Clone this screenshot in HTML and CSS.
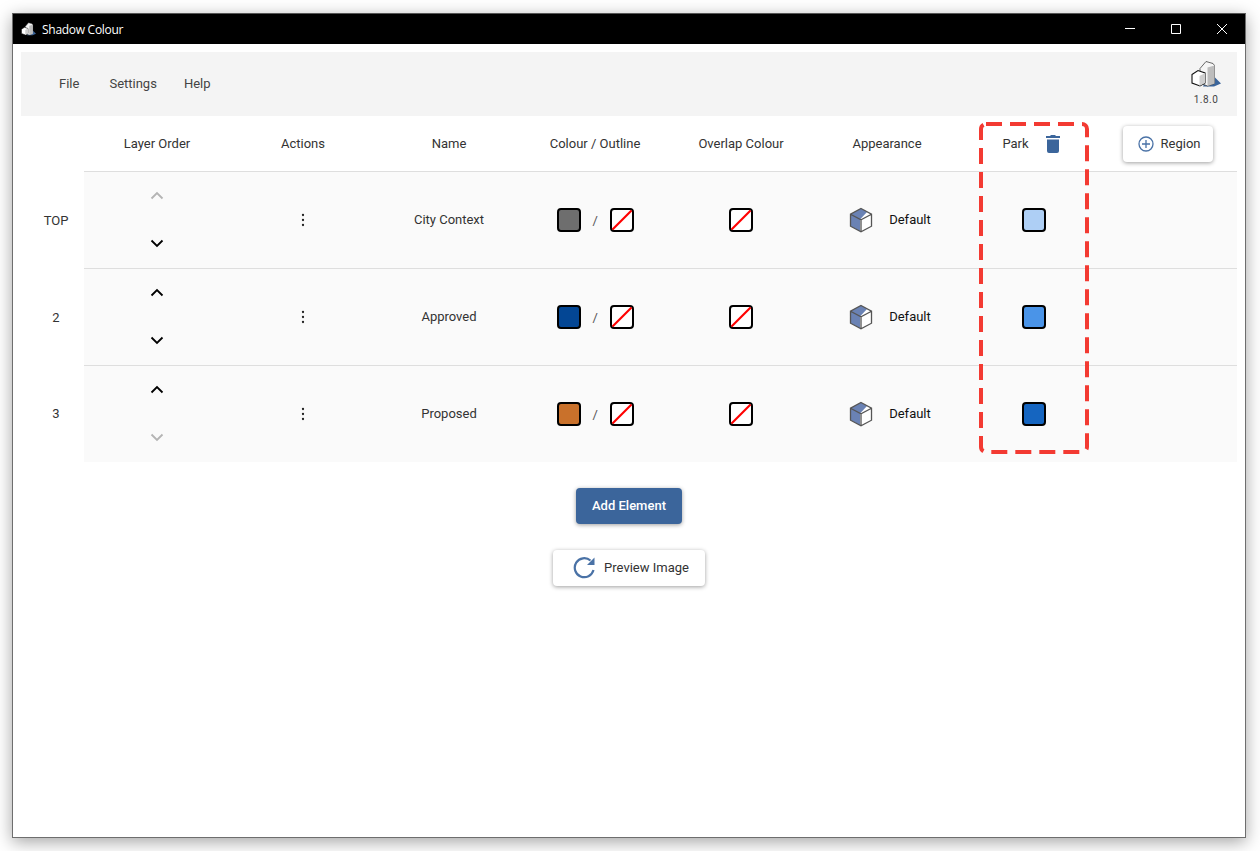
FILE: index.html
```html
<!DOCTYPE html>
<html lang="en">
<head>
<meta charset="utf-8">
<title>Shadow Colour</title>
<link rel="stylesheet" href="styles.css">
</head>
<body>
<svg width="0" height="0" class="defs">
  <defs>
    <symbol id="up" viewBox="0 0 14 9"><path d="M1.500 7.500 7 2l5.500 5.500" fill="none" stroke="currentColor" stroke-width="1.800"/></symbol>
    <symbol id="down" viewBox="0 0 14 9"><path d="M1.500 1.500 7 7l5.500-5.500" fill="none" stroke="currentColor" stroke-width="1.800"/></symbol>
    <symbol id="dots" viewBox="0 0 4 14"><circle cx="2" cy="2" r="1.150"/><circle cx="2" cy="7" r="1.150"/><circle cx="2" cy="12" r="1.150"/></symbol>
    <symbol id="none" viewBox="0 0 24 24"><rect x="1" y="1" width="22" height="22" rx="3" fill="#fff" stroke="#000" stroke-width="2"/><path d="M2.500 21.500 21.500 2.500" stroke="#f00" stroke-width="2.200"/></symbol>
    <symbol id="cube" viewBox="0 0 24 26"><path d="M12 1.500 22.500 7.200v12L12 24.800 1.500 19.200v-12z" fill="#fff"/><path d="M12 1.500 1.500 7.200v12l9.500 5V12.500L18 5z" fill="#6a82b4"/><path d="M12 1.500 22.500 7.200v12L12 24.800 1.500 19.200v-12zM1.500 7.200 12 12.800l10.500-5.600M12 12.800v12" fill="none" stroke="#555" stroke-width="1.300"/></symbol>
    <symbol id="building" viewBox="0 0 30 28">
      <path d="M12 26.500h11l7-3-6-6-8 0z" fill="#3b659b"/>
      <path d="M9 8.500 15 1.500l7 2 1.500 2v18l-7 2.500-7.500-3z" fill="#f6f6f6" stroke="#444" stroke-width=".8"/>
      <path d="M16.500 7.500v18.500l7-2.500V5.500z" fill="#bdbdbd"/>
      <path d="M1 14.500 7 10.500l7 2.500v10l-5 3-8-3z" fill="#fff" stroke="#111" stroke-width="1.100"/>
      <path d="M8.500 16v10l5.500-3V13z" fill="#cfcfcf"/>
    </symbol>
  </defs>
</svg>
<div class="window">
  <header class="titlebar">
    <svg class="app-icon"><use href="#building"/></svg>
    <span class="title">Shadow Colour</span>
    <div class="controls">
      <svg class="ctl" viewBox="0 0 46 30"><path d="M18 14.500h10" stroke="#fff" fill="none"/></svg>
      <svg class="ctl" viewBox="0 0 46 30"><path d="M18.500 10.500h9v9h-9z" stroke="#fff" fill="none"/></svg>
      <svg class="ctl" viewBox="0 0 46 30"><path d="M18 10l10 10M28 10 18 20" stroke="#fff" fill="none"/></svg>
    </div>
  </header>
  <main class="content">
    <nav class="toolbar">
      <span class="menu m-file">File</span>
      <span class="menu m-settings">Settings</span>
      <span class="menu m-help">Help</span>
      <div class="version">
        <svg class="logo"><use href="#building"/></svg>
        <span>1.8.0</span>
      </div>
    </nav>
    <div class="table">
      <div class="head">
        <span class="cell">Layer Order</span>
        <span class="cell">Actions</span>
        <span class="cell">Name</span>
        <span class="cell">Colour / Outline</span>
        <span class="cell">Overlap Colour</span>
        <span class="cell">Appearance</span>
        <span class="cell park-head">Park
          <svg class="trash" viewBox="0 0 14 18"><path d="M5 0h4l1 1h4v2H0V1h4zM1 4.500h12V16a2 2 0 0 1-2 2H3a2 2 0 0 1-2-2z" fill="#3b659b"/></svg>
        </span>
        <span class="cell">
          <button class="btn region">
            <svg class="plus" viewBox="0 0 16 16"><circle cx="8" cy="8" r="7" fill="none" stroke="#4a72a6" stroke-width="1.300"/><path d="M8 4v8M4 8h8" stroke="#4a72a6" stroke-width="1.300"/></svg>
            Region
          </button>
        </span>
      </div>

      <div class="row-wrap">
        <span class="rank">TOP</span>
        <div class="row">
          <div class="cell order"><svg class="chev off"><use href="#up"/></svg><svg class="chev"><use href="#down"/></svg></div>
          <div class="cell"><svg class="dots"><use href="#dots"/></svg></div>
          <div class="cell name">City Context</div>
          <div class="cell colours"><i class="swatch c-grey"></i><span class="slash">/</span><svg class="nofill"><use href="#none"/></svg></div>
          <div class="cell"><svg class="nofill"><use href="#none"/></svg></div>
          <div class="cell look"><svg class="cube"><use href="#cube"/></svg><span>Default</span></div>
          <div class="cell"><i class="swatch c-light"></i></div>
          <div class="cell"></div>
        </div>
      </div>

      <div class="row-wrap">
        <span class="rank">2</span>
        <div class="row">
          <div class="cell order"><svg class="chev"><use href="#up"/></svg><svg class="chev"><use href="#down"/></svg></div>
          <div class="cell"><svg class="dots"><use href="#dots"/></svg></div>
          <div class="cell name">Approved</div>
          <div class="cell colours"><i class="swatch c-navy"></i><span class="slash">/</span><svg class="nofill"><use href="#none"/></svg></div>
          <div class="cell"><svg class="nofill"><use href="#none"/></svg></div>
          <div class="cell look"><svg class="cube"><use href="#cube"/></svg><span>Default</span></div>
          <div class="cell"><i class="swatch c-mid"></i></div>
          <div class="cell"></div>
        </div>
      </div>

      <div class="row-wrap">
        <span class="rank">3</span>
        <div class="row">
          <div class="cell order"><svg class="chev"><use href="#up"/></svg><svg class="chev off"><use href="#down"/></svg></div>
          <div class="cell"><svg class="dots"><use href="#dots"/></svg></div>
          <div class="cell name">Proposed</div>
          <div class="cell colours"><i class="swatch c-orange"></i><span class="slash">/</span><svg class="nofill"><use href="#none"/></svg></div>
          <div class="cell"><svg class="nofill"><use href="#none"/></svg></div>
          <div class="cell look"><svg class="cube"><use href="#cube"/></svg><span>Default</span></div>
          <div class="cell"><i class="swatch c-blue"></i></div>
          <div class="cell"></div>
        </div>
      </div>
    </div>
    <div class="actions">
      <button class="btn add">Add Element</button>
      <button class="btn preview">
        <svg class="refresh" viewBox="0 0 24 24"><path d="M20.500 14a9.500 9.500 0 1 1-3-9.500" fill="none" stroke="#4a72a6" stroke-width="2.200"/><path d="M21.500 1.500v7.500h-7.500z" fill="#4a72a6"/></svg>
        Preview Image
      </button>
    </div>
    <svg class="highlight" viewBox="0 0 110 332"><rect x="2" y="2" width="106" height="328" rx="5" fill="none" stroke="#f33a32" stroke-width="4" stroke-dasharray="16 8"/></svg>
  </main>
</div>
</body>
</html>
```

FILE: styles.css
```css
* { box-sizing: border-box; }
html, body { margin: 0; height: 100%; background: #fff; overflow: hidden; }
body { padding: 13px 0 0 12px; font-family: Roboto, "Liberation Sans", sans-serif; font-size: 13px; color: #333; }
.defs { position: absolute; }
.window {
  width: 1234px;
  height: 825px;
  background: #fff;
  border: 1px solid #6e6e6e;
  border-top-color: #555;
  box-shadow: 0 4px 16px rgba(0, 0, 0, .36);
  display: flex;
  flex-direction: column;
}
.titlebar { height: 30px; flex: none; background: #000; color: #fff; display: flex; align-items: center; padding-left: 8px; }
.app-icon { width: 15px; height: 14px; margin-right: 6px; }
.title { font-family: "Open Sans", sans-serif; font-size: 12px; letter-spacing: -.28px; }
.controls { margin-left: auto; display: flex; }
.ctl { width: 46px; height: 30px; }
.content { position: relative; flex: 1; padding: 8px 8px 0; }
.toolbar { height: 64px; background: #f4f4f4; display: flex; align-items: center; position: relative; }
.menu { color: #444; padding-bottom: 2px; }
.m-file { margin-left: 38px; }
.m-settings { margin-left: 30px; }
.m-help { margin-left: 27px; }
.version { margin-left: auto; margin-right: 16px; width: 30px; display: flex; flex-direction: column; align-items: center; font-size: 10px; letter-spacing: .5px; color: #444; gap: 6px; padding-bottom: 3px; }
.logo { width: 30px; height: 28px; }
.table { display: flex; flex-direction: column; }
.head { margin-left: 63px; height: 56px; display: grid; grid-template-columns: repeat(6, 146px) 147px 130px; border-bottom: 1px solid #dedede; }
.cell { display: flex; align-items: center; justify-content: center; min-width: 0; }
.row-wrap { display: flex; height: 97px; }
.row-wrap:last-child { height: 96px; }
.rank { width: 63px; flex: none; display: flex; align-items: center; justify-content: center; padding-left: 7px; }
.row-wrap:last-child .rank { padding-bottom: 2px; }
.row { flex: 1; display: grid; grid-template-columns: repeat(6, 146px) 147px 130px; background: #fafafa; border-bottom: 1px solid #dedede; }
.row-wrap:last-child .row { border-bottom: 0; }
.order { flex-direction: column; gap: 39px; padding-bottom: 2px; }
.chev { width: 14px; height: 9px; color: #000; display: block; }
.chev.off { color: #b4b4b4; }
.dots { width: 4px; height: 14px; fill: #222; }
.name { padding-bottom: 2px; }
.swatch { display: block; width: 24px; height: 24px; border: 2px solid #000; border-radius: 4px; }
.c-grey { background: #6e6e6e; }
.c-light { background: #aecff5; }
.c-navy { background: #034694; }
.c-mid { background: #4a94e8; }
.c-orange { background: #c9712b; }
.c-blue { background: #1565c0; }
.nofill { width: 24px; height: 24px; display: block; }
.colours { gap: 12px; }
.slash { color: #555; width: 5px; text-align: center; }
.look { gap: 16px; color: #111; padding-left: 6px; }
.look span { padding-bottom: 2px; }
.cube { width: 24px; height: 26px; }
.park-head { gap: 17px; padding-right: 5px; }
.trash { width: 14px; height: 18px; }
.btn { font: inherit; border: 0; border-radius: 4px; background: #fff; color: #333; box-shadow: 0 1px 4px rgba(0, 0, 0, .38); display: flex; align-items: center; justify-content: center; padding: 0; }
.region { width: 90px; height: 36px; gap: 7px; margin-left: 16px; margin-right: 24px; padding-left: 2px; }
.plus { width: 16px; height: 16px; }
.actions { display: flex; flex-direction: column; align-items: center; margin-top: 26px; gap: 26px; }
.add { width: 106px; height: 36px; background: #3b659b; color: #fff; font-weight: 500; padding-bottom: 2px; }
.preview { width: 152px; height: 36px; gap: 7px; padding: 0 0 2px 4px; }
.refresh { width: 24px; height: 24px; margin-top: 2px; }
.highlight { position: absolute; left: 966px; top: 78px; width: 110px; height: 332px; }
```
